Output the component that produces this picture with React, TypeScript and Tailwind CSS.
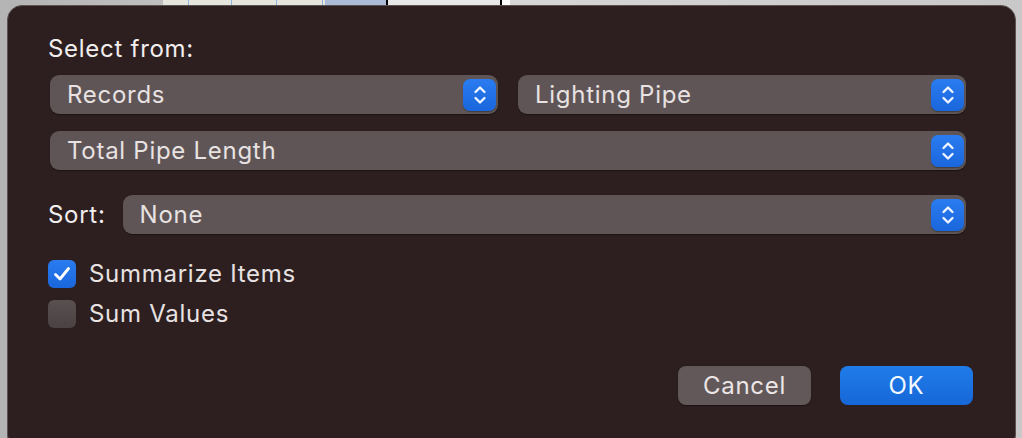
// Summarize dialog — dark macOS sheet over a spreadsheet window.

const font = { fontFamily: "Inter, 'Noto Sans', sans-serif" };

function Stepper() {
  return (
    <div className="flex h-[32px] w-[33px] shrink-0 items-center justify-center rounded-[7px] bg-gradient-to-b from-[#2a7cf0] to-[#1a66dc] shadow-[0_1px_1px_rgba(0,0,0,0.3)]">
      <svg width="14" height="22" viewBox="0 0 14 22" fill="none">
        <path
          d="M2.5 8 L7 3.5 L11.5 8"
          stroke="#f2f6ff"
          strokeWidth="2.3"
          strokeLinecap="round"
          strokeLinejoin="round"
        />
        <path
          d="M2.5 14 L7 18.5 L11.5 14"
          stroke="#f2f6ff"
          strokeWidth="2.3"
          strokeLinecap="round"
          strokeLinejoin="round"
        />
      </svg>
    </div>
  );
}

function Popup({ label, className }: { label: string; className?: string }) {
  return (
    <div
      className={
        "flex h-[39px] items-center justify-between rounded-[9px] bg-[#5f5556] pl-[17px] pr-[2px] shadow-[0_0.5px_1px_rgba(0,0,0,0.4)] " +
        (className ?? "")
      }
    >
      <span className="text-[24px] leading-none tracking-[0.03em] text-[#e8e2e2]">{label}</span>
      <Stepper />
    </div>
  );
}

function Checkbox({ checked, label }: { checked?: boolean; label: string }) {
  return (
    <div className="flex items-center gap-[13px]">
      {checked ? (
        <div className="flex h-[28px] w-[28px] items-center justify-center rounded-[6px] bg-gradient-to-b from-[#2a7cf0] to-[#1a66dc]">
          <svg width="18" height="16" viewBox="0 0 18 16" fill="none">
            <path
              d="M2.5 8.5 L7 13 L15.5 2.5"
              stroke="#ffffff"
              strokeWidth="2.8"
              strokeLinecap="round"
              strokeLinejoin="round"
            />
          </svg>
        </div>
      ) : (
        <div className="h-[28px] w-[28px] rounded-[6px] bg-gradient-to-b from-[#585051] to-[#4a4243]" />
      )}
      <span className="text-[24px] leading-none tracking-[0.03em] text-[#e8e2e2]">{label}</span>
    </div>
  );
}

export default function App() {
  return (
    <div
      className="h-[438px] w-[1022px] overflow-hidden bg-gradient-to-r from-[#b4b4b4] via-[#d6d6d6] to-[#c8c8c8]"
      style={font}
    >
      {/* window behind the sheet */}
      <div className="flex h-[5px]">
        <div className="w-[163px]" />
        <div className="flex w-[162px] bg-[#e6e6de]">
          <div className="w-[26px] border-r border-[#8fb4e0]" />
          <div className="w-[43px] border-r border-[#8fb4e0]" />
          <div className="w-[45px] border-r border-[#8fb4e0]" />
          <div className="w-[46px] border-r border-[#8fb4e0]" />
        </div>
        <div className="w-[61px] bg-[#a9bbd6]" />
        <div className="w-[2px] bg-black" />
        <div className="w-[112px] bg-[#e8e8e8]" />
        <div className="w-[2px] bg-black" />
        <div className="w-[8px] bg-white" />
      </div>

      <div className="ml-[7px] h-[445px] w-[1009px] rounded-[15px] border border-[#5c5253] bg-[#2d1f20] px-[40px] pt-[31px]">
        <div className="text-[24px] leading-none tracking-[0.03em] text-[#f2eeee]">Select from:</div>

        <div className="mt-[14px] ml-[2px] flex gap-[20px]">
          <Popup label="Records" className="w-[448px]" />
          <Popup label="Lighting Pipe" className="w-[448px]" />
        </div>

        <Popup label="Total Pipe Length" className="mt-[17px] ml-[2px] w-[916px]" />

        <div className="mt-[25px] flex w-[918px] items-center gap-[17px]">
          <span className="text-[24px] leading-none tracking-[0.03em] text-[#f2eeee]">Sort:</span>
          <Popup label="None" className="flex-1" />
        </div>

        <div className="mt-[26px] flex flex-col gap-[12px]">
          <Checkbox checked label="Summarize Items" />
          <Checkbox label="Sum Values" />
        </div>

        <div className="mt-[38px] flex justify-end gap-[29px] pr-[2px]">
          <button className="flex h-[39px] w-[133px] items-center justify-center rounded-[8px] bg-[#625859] text-[24px] tracking-[0.03em] text-[#ece6e6] shadow-[0_0.5px_1px_rgba(0,0,0,0.4)]">
            Cancel
          </button>
          <button className="flex h-[39px] w-[133px] items-center justify-center rounded-[8px] bg-gradient-to-b from-[#1f7ce8] to-[#1767d8] text-[24px] tracking-[0.03em] text-[#f4f8ff]">
            OK
          </button>
        </div>
      </div>
    </div>
  );
}
